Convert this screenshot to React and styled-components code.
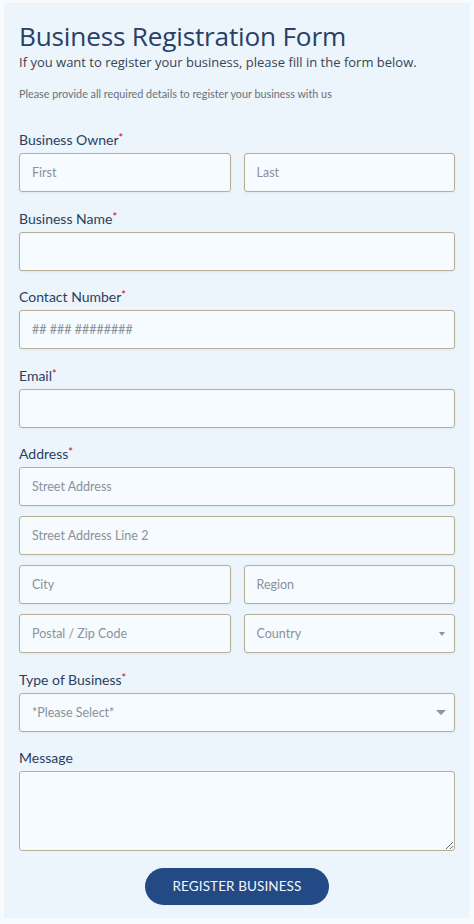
import styled, { createGlobalStyle } from 'styled-components'

const GlobalStyle = createGlobalStyle`
  html, body {
    margin: 0;
    padding: 0;
    background: #f7fbfd;
  }
  * {
    box-sizing: border-box;
  }
`

const Panel = styled.form`
  margin: 3px 4px 6px;
  padding: 16px 15px 13px;
  background: #ebf5fb;
  display: flex;
  flex-direction: column;
`

const Title = styled.h1`
  margin: 0;
  font-family: 'Open Sans', sans-serif;
  font-weight: 400;
  font-size: 26.2px;
  letter-spacing: -0.2px;
  line-height: 34px;
  color: #283f66;
`

const Subtitle = styled.p`
  margin: -1px 0 0;
  font-family: 'Open Sans', sans-serif;
  font-size: 13px;
  line-height: 20px;
  color: #3a4352;
  white-space: nowrap;
`

const Note = styled.p`
  margin: 15px 0 30px;
  font-family: Lato, sans-serif;
  font-size: 10.8px;
  line-height: 14px;
  color: #6b7079;
`

const Field = styled.div`
  display: flex;
  flex-direction: column;
  margin-bottom: 17.5px;
`

const Label = styled.label`
  display: block;
  height: 18px;
  font-family: Lato, sans-serif;
  font-size: 14px;
  line-height: 18px;
  color: #2b3e5f;
  margin-bottom: 4px;
`

const Req = styled.span`
  position: relative;
  top: -3px;
  color: #d0021b;
  font-size: 11px;
  line-height: 0;
`

const Rows = styled.div`
  display: flex;
  flex-direction: column;
  gap: 10px;
`

const Pair = styled.div`
  display: grid;
  grid-template-columns: 1fr 1fr;
  gap: 13px;
`

const Input = styled.input`
  width: 100%;
  height: 39px;
  padding: 0 12px;
  border: 1px solid #b8ae95;
  border-radius: 3px;
  background: #f5fbfe;
  box-shadow: 0 1px 2px rgba(90, 110, 130, 0.08);
  font-family: Lato, sans-serif;
  font-size: 12.5px;
  color: #333;
  outline: none;
  &::placeholder {
    color: #8c919a;
  }
`

const SelectBox = styled.div`
  position: relative;
  height: 39px;
  display: flex;
  align-items: center;
  padding: 0 12px;
  border: 1px solid #b8ae95;
  border-radius: 3px;
  background: #f5fbfe;
  box-shadow: 0 1px 2px rgba(90, 110, 130, 0.08);
  font-family: Lato, sans-serif;
  font-size: 12.5px;
  color: #8c919a;
`

const Arrow = styled.span`
  position: absolute;
  right: ${({ $small }) => ($small ? '9px' : '8px')};
  top: 50%;
  margin-top: -2px;
  width: 0;
  height: 0;
  border-left: ${({ $small }) => ($small ? '3.5px' : '5px')} solid transparent;
  border-right: ${({ $small }) => ($small ? '3.5px' : '5px')} solid transparent;
  border-top: ${({ $small }) => ($small ? '4px' : '5px')} solid #8e9299;
`

const TextArea = styled.textarea`
  width: 100%;
  height: 80px;
  padding: 8px 12px;
  border: 1px solid #b8ae95;
  border-radius: 3px;
  background: #f5fbfe;
  font-family: Lato, sans-serif;
  font-size: 12.5px;
  resize: vertical;
  outline: none;
  display: block;
`

const Submit = styled.button`
  align-self: center;
  margin-top: -1px;
  width: 184px;
  height: 37px;
  border: none;
  border-radius: 19px;
  background: #234a84;
  color: #f2f6fb;
  font-family: Lato, sans-serif;
  font-size: 13.5px;
  letter-spacing: 0.1px;
  text-transform: uppercase;
  cursor: pointer;
`

const RequiredLabel = ({ children }) => (
  <Label>
    {children}
    <Req>*</Req>
  </Label>
)

const App = () => (
  <>
    <GlobalStyle />
    <Panel onSubmit={(e) => e.preventDefault()}>
      <Title>Business Registration Form</Title>
      <Subtitle>If you want to register your business, please fill in the form below.</Subtitle>
      <Note>Please provide all required details to register your business with us</Note>

      <Field>
        <RequiredLabel>Business Owner</RequiredLabel>
        <Pair>
          <Input placeholder="First" />
          <Input placeholder="Last" />
        </Pair>
      </Field>

      <Field>
        <RequiredLabel>Business Name</RequiredLabel>
        <Input />
      </Field>

      <Field>
        <RequiredLabel>Contact Number</RequiredLabel>
        <Input placeholder="## ### ########" />
      </Field>

      <Field>
        <RequiredLabel>Email</RequiredLabel>
        <Input />
      </Field>

      <Field>
        <RequiredLabel>Address</RequiredLabel>
        <Rows>
          <Input placeholder="Street Address" />
          <Input placeholder="Street Address Line 2" />
          <Pair>
            <Input placeholder="City" />
            <Input placeholder="Region" />
          </Pair>
          <Pair>
            <Input placeholder="Postal / Zip Code" />
            <SelectBox>
              Country
              <Arrow $small />
            </SelectBox>
          </Pair>
        </Rows>
      </Field>

      <Field>
        <RequiredLabel>Type of Business</RequiredLabel>
        <SelectBox>
          *Please Select*
          <Arrow />
        </SelectBox>
      </Field>

      <Field>
        <Label>Message</Label>
        <TextArea />
      </Field>

      <Submit type="submit">Register Business</Submit>
    </Panel>
  </>
)

export default App
